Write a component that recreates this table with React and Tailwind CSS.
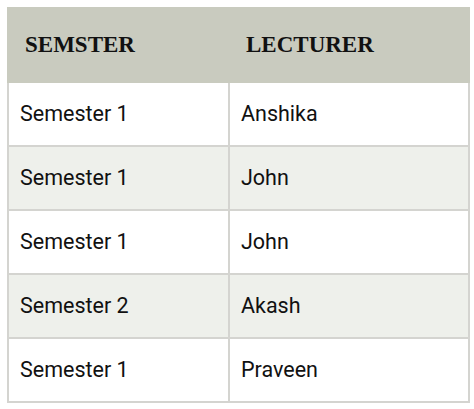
export default function App() {
  const rows = [
    ["Semester 1", "Anshika"],
    ["Semester 1", "John"],
    ["Semester 1", "John"],
    ["Semester 2", "Akash"],
    ["Semester 1", "Praveen"],
  ];
  return (
    <div className="w-[474px] h-[409px] bg-white pt-[7px] pl-[7px]">
      <table className="w-[461px] border-collapse table-fixed">
        <colgroup>
          <col className="w-[221px]" />
          <col className="w-[240px]" />
        </colgroup>
        <thead>
          <tr className="h-[74px] bg-[#c9cbbf]">
            <th className="text-left pl-[16px] font-bold text-[23px] text-[#111] font-['Liberation_Serif',serif] border-2 border-[#c9cbbf]">SEMSTER</th>
            <th className="text-left pl-[16px] font-bold text-[23px] text-[#111] font-['Liberation_Serif',serif] border-2 border-[#c9cbbf]">LECTURER</th>
          </tr>
        </thead>
        <tbody>
          {rows.map((r, i) => (
            <tr key={i} className={`h-[64px] ${i % 2 === 1 ? "bg-[#eef0eb]" : "bg-white"}`}>
              <td className="pl-[11px] text-[21.5px] text-[#111] font-['Roboto',sans-serif] border-2 border-[#d4d4d0]">{r[0]}</td>
              <td className="pl-[11px] text-[21.5px] text-[#111] font-['Roboto',sans-serif] border-2 border-[#d4d4d0]">{r[1]}</td>
            </tr>
          ))}
        </tbody>
      </table>
    </div>
  );
}
